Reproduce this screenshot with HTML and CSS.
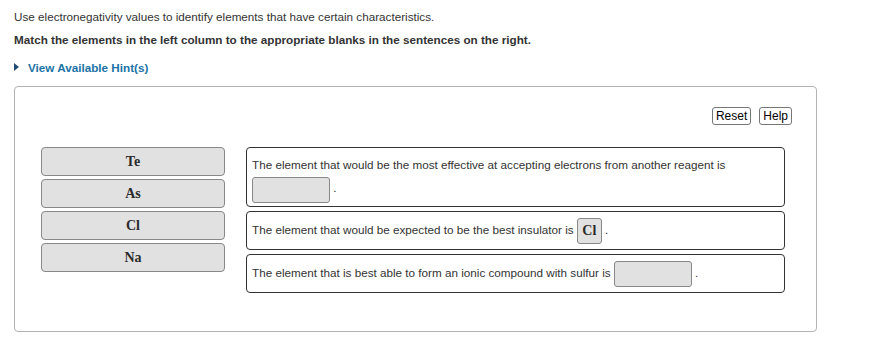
FILE: index.html
```html
<!DOCTYPE html>
<html lang="en">
<head>
    <meta charset="UTF-8">
    <meta name="viewport" content="width=device-width, initial-scale=1.0">
    <title>Electronegativity - Matching</title>
    <link rel="stylesheet" href="styles.css">
</head>
<body>

    <div class="intro">
        <p>Use electronegativity values to identify elements that have certain characteristics.</p>
        <p class="task">Match the elements in the left column to the appropriate blanks in the sentences on the right.</p>
        <a class="hint" href="#"><span class="arrow"></span>View Available Hint(s)</a>
    </div>

    <div class="panel">
        <div class="toolbar">
            <button class="tool-btn">Reset</button>
            <button class="tool-btn">Help</button>
        </div>

        <div class="match">
            <!-- Draggable elements -->
            <div class="choices">
                <div class="choice">Te</div>
                <div class="choice">As</div>
                <div class="choice">Cl</div>
                <div class="choice">Na</div>
            </div>

            <!-- Sentences with blanks -->
            <div class="sentences">
                <div class="sentence tall">
                    The element that would be the most effective at accepting electrons from another reagent is
                    <span class="blank"></span> .
                </div>
                <div class="sentence">
                    The element that would be expected to be the best insulator is
                    <span class="chip">Cl</span> .
                </div>
                <div class="sentence">
                    The element that is best able to form an ionic compound with sulfur is
                    <span class="blank"></span> .
                </div>
            </div>
        </div>
    </div>

</body>
</html>
```

FILE: styles.css
```css
body {
    margin: 0;
    padding: 9px 14px;
    font-family: 'Liberation Sans', Arial, sans-serif;
    font-size: 11.7px;
    color: #333;
    background: #fff;
}

.intro p {
    margin: 0 0 7px;
    line-height: 16px;
}

.task {
    font-weight: bold;
}

.hint {
    display: flex;
    align-items: center;
    margin-top: 11px;
    height: 16px;
    font-weight: bold;
    color: #2073a6;
    text-decoration: none;
}

.arrow {
    width: 0;
    height: 0;
    border-top: 4px solid transparent;
    border-bottom: 4px solid transparent;
    border-left: 5px solid #234d70;
    margin-right: 9px;
}

.panel {
    margin-top: 11px;
    width: 803px;
    height: 246px;
    border: 1px solid #b3b3b3;
    border-radius: 4px;
    padding: 20px 24px 0 26px;
    box-sizing: border-box;
}

.toolbar {
    display: flex;
    justify-content: flex-end;
    gap: 8px;
}

.tool-btn {
    font-family: 'Liberation Sans', Arial, sans-serif;
    font-size: 12px;
    color: #000;
    background: #fff;
    border: 1px solid #767676;
    border-radius: 3px;
    height: 18px;
    padding: 0 3px;
    line-height: 16px;
}

.match {
    display: flex;
    gap: 21px;
    margin-top: 22px;
    padding-right: 7px;
}

.choices {
    width: 184px;
    display: flex;
    flex-direction: column;
    gap: 3px;
}

.choice,
.chip {
    font-family: 'Liberation Serif', 'Times New Roman', serif;
    font-weight: bold;
    font-size: 14px;
    color: #2b2b2b;
    background: #e1e1e1;
    border: 1px solid #888;
    box-sizing: border-box;
}

.choice {
    height: 29px;
    line-height: 27px;
    text-align: center;
    border-radius: 4px;
}

.sentences {
    flex: 1;
    display: flex;
    flex-direction: column;
    gap: 4px;
}

.sentence {
    border: 1px solid #333;
    border-radius: 4px;
    padding: 5px 5px;
    line-height: 26px;
}

.sentence.tall {
    padding: 7px 5px 3px;
    line-height: 20px;
}

.blank,
.chip {
    display: inline-block;
    vertical-align: middle;
    height: 26px;
    border-radius: 3px;
    box-sizing: border-box;
}

.blank {
    width: 78px;
    background: #e1e1e1;
    border: 1px solid #888;
}

.tall .blank {
    margin-top: 2px;
}

.chip {
    width: 25px;
    line-height: 24px;
    text-align: center;
}
```
